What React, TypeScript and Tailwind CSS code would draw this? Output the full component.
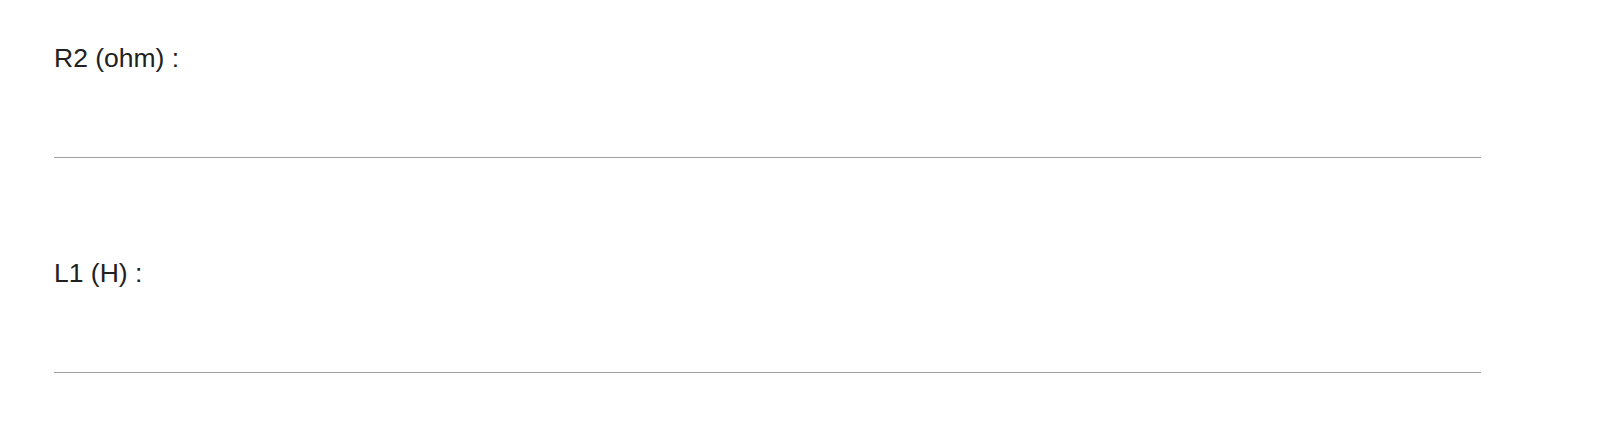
import React from "react";

const fields = [
  { id: "r2", label: "R2 (ohm) :" },
  { id: "l1", label: "L1 (H) :" },
];

export default function App() {
  return (
    <div className="min-h-[437px] w-full bg-white pl-[54px] pt-[43px] font-['Liberation_Sans',Arial,sans-serif] text-[#212121]">
      {fields.map((f) => (
        <div key={f.id} className="mb-[100px] w-[1427px]">
          <label htmlFor={f.id} className="block text-[26.5px] leading-[30px]">
            {f.label}
          </label>
          <input
            id={f.id}
            type="text"
            className="block h-[85px] w-full border-0 border-b border-[#9e9e9e] bg-transparent text-[26px] outline-none"
          />
        </div>
      ))}
    </div>
  );
}
